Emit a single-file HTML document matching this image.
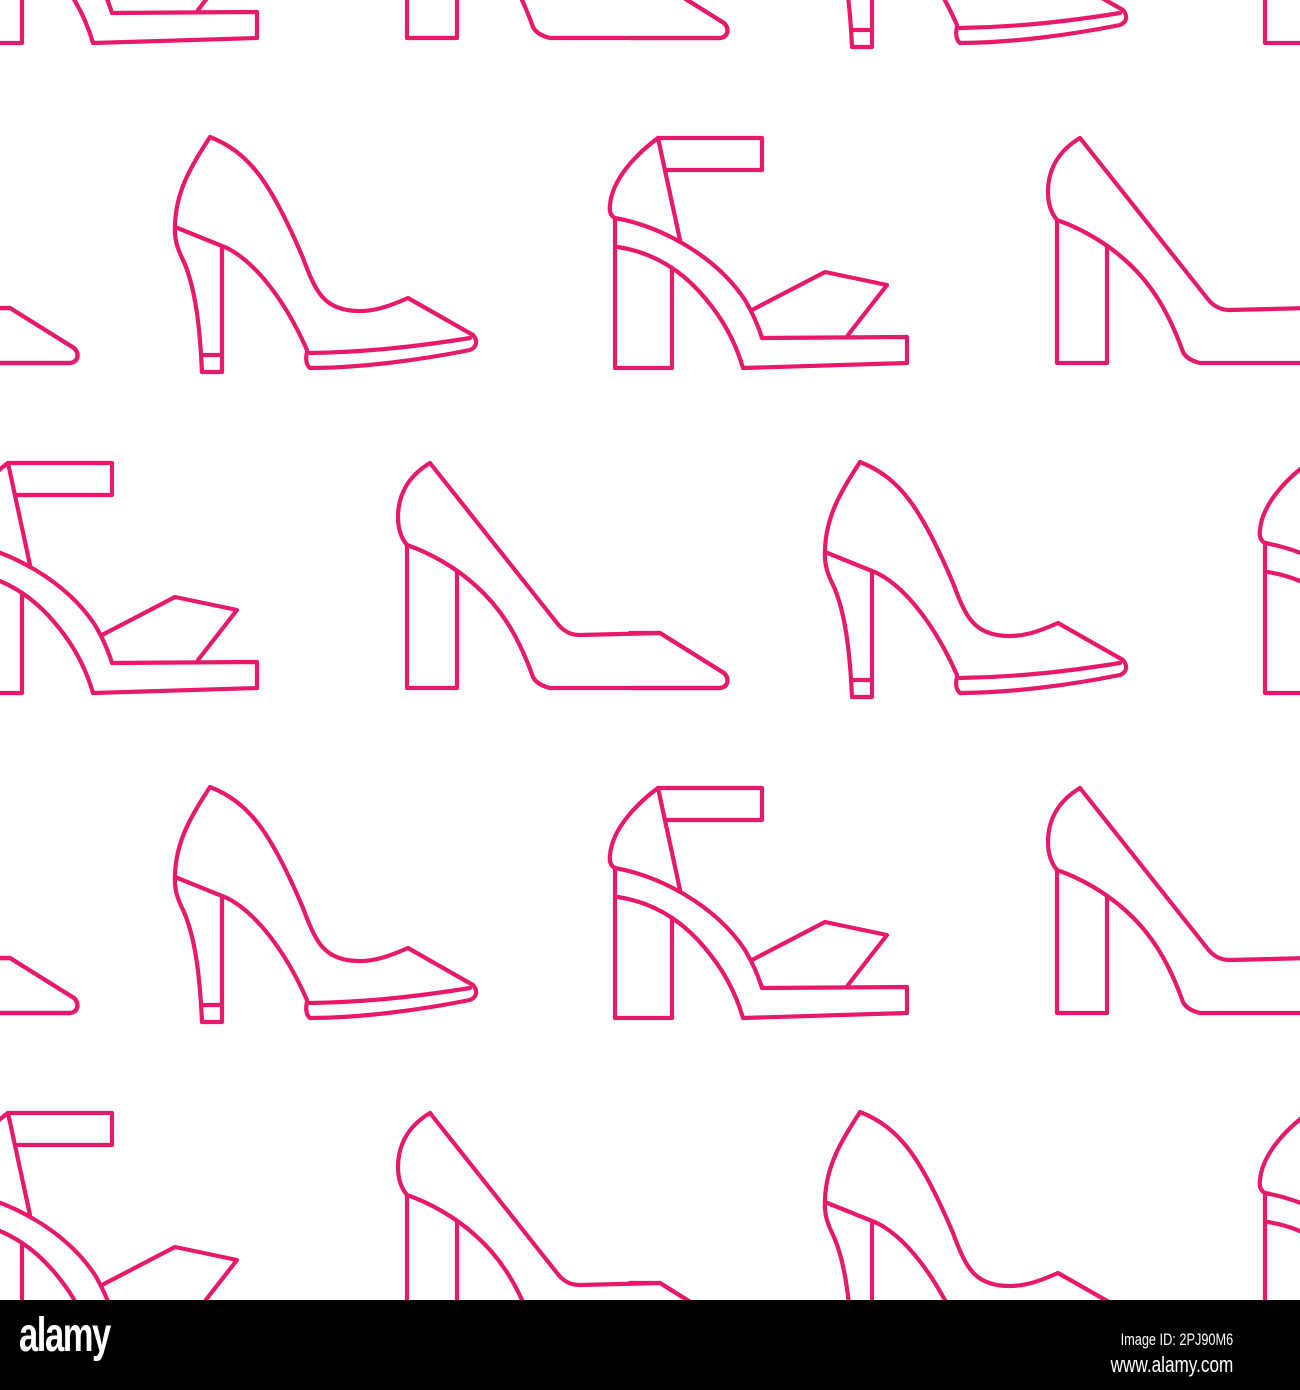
<!DOCTYPE html>
<html><head><meta charset="utf-8"><style>
html,body{margin:0;padding:0;background:#fff;}
body{width:1300px;height:1390px;overflow:hidden;position:relative;}
svg{display:block;position:absolute;left:0;top:0;}
.bar{position:absolute;left:0;top:1300px;width:1300px;height:90px;background:#000;}
.logo{position:absolute;left:19px;top:8px;color:#fff;font:bold 48px "Liberation Sans",sans-serif;letter-spacing:-2px;transform:scaleX(0.72);transform-origin:left top;}
.t1{position:absolute;right:67px;top:30px;color:#fff;font:17px "Liberation Sans",sans-serif;transform:scaleX(0.75);transform-origin:right top;white-space:nowrap;}
.t2{position:absolute;right:67px;top:52px;color:#fff;font:22px "Liberation Sans",sans-serif;transform:scaleX(0.78);transform-origin:right top;white-space:nowrap;}
</style></head><body>
<svg width="1300" height="1300" viewBox="0 0 1300 1300" xmlns="http://www.w3.org/2000/svg">
<defs>
<g id="tile" fill="none" stroke="#e8196a" stroke-width="4.2" stroke-linejoin="round" stroke-linecap="round">
  <path d="M210 137 C192 165 176 190 175 225 C174 240 178 250 184 262 C196 290 200 330 202 372 L222 372 L222 248"/>
  <path d="M210 137 C248 152 270 180 303 258 C315 290 322 305 347 310 C370 314 390 306 408 298 L473 335 C478 341 477 347 470 350 C420 360 360 368 310 368 C305 364 306 356 307 352"/>
  <path d="M175 227 L227 248 C255 262 285 300 307 350"/>
  <path d="M310 353 C370 352 420 346 470 338"/>
  <path d="M202 355 L222 355"/>
  <path d="M658 138 L762 138 L762 170 L666 170"/>
  <path d="M658 138 L680 240"/>
  <path d="M658 138 C635 155 612 180 610 205 C609 212 611 216 615 218"/>
  <path d="M615 218 C660 226 715 255 745 300 C752 312 758 325 762 338 L907 337 L907 363 L743 368 C735 340 722 318 705 298 C680 268 650 252 618 247"/>
  <path d="M615 218 L615 368 L672 368 L672 268"/>
  <path d="M752 310 L825 272 L887 285 L848 335"/>
  <path d="M1080 138 C1060 150 1048 168 1048 192 C1048 205 1052 214 1057 220 L1057 363 L1107 363 L1107 247"/>
  <path d="M1080 138 L1207 298 C1213 306 1220 310 1230 310 L1310 308 L1374 348 C1380 354 1378 362 1370 363 L1200 363 C1192 361 1186 358 1183 352 C1168 310 1150 282 1125 260 C1105 242 1080 228 1057 220"/>
  <path d="M-20 308 L10 308 L74 348 C80 354 78 362 70 363 L-20 363"/>
</g>
</defs>
<use href="#tile" x="0" y="-650"/>
<use href="#tile" x="0" y="0"/>
<use href="#tile" x="0" y="650"/>
<use href="#tile" x="-1300" y="-650"/>
<use href="#tile" x="-1300" y="0"/>
<use href="#tile" x="-1300" y="650"/>
<use href="#tile" x="650" y="-325"/>
<use href="#tile" x="650" y="325"/>
<use href="#tile" x="650" y="975"/>
<use href="#tile" x="-650" y="-325"/>
<use href="#tile" x="-650" y="325"/>
<use href="#tile" x="-650" y="975"/>
</svg>
<div class="bar">
  <div class="logo">alamy</div>
  <div class="t1">Image ID: 2PJ90M6</div>
  <div class="t2">www.alamy.com</div>
</div>
</body></html>
